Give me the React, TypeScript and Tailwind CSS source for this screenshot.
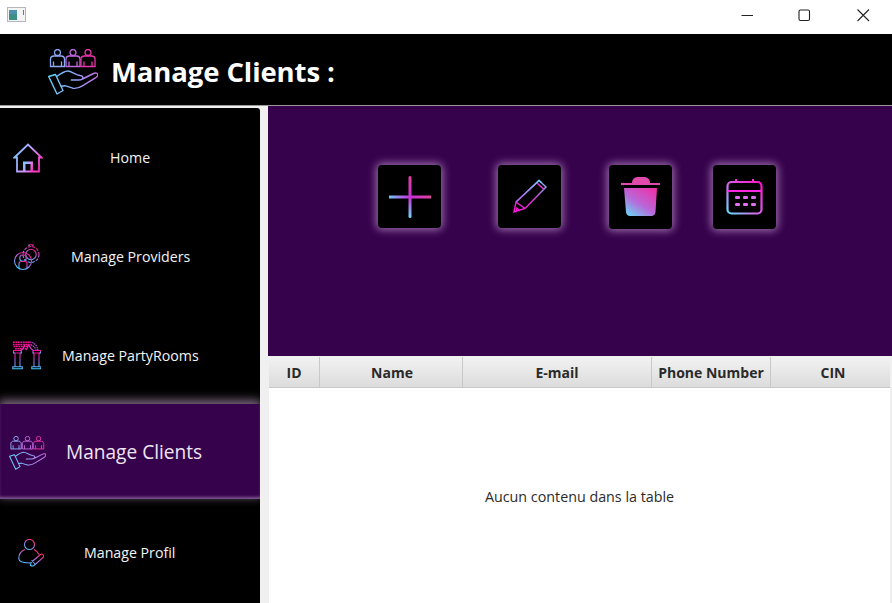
const FONT = "font-['Open_Sans','Noto_Sans',sans-serif]";

function Grad({ id, x1 = 0, y1 = 1, x2 = 1, y2 = 0, from = "#5fd3f8", mid = "#b070e0", to = "#f01fa8" }: { id: string; x1?: number; y1?: number; x2?: number; y2?: number; from?: string; mid?: string; to?: string }) {
  return (
    <defs>
      <linearGradient id={id} x1={x1} y1={y1} x2={x2} y2={y2}>
        <stop offset="0" stopColor={from} />
        <stop offset="0.5" stopColor={mid} />
        <stop offset="1" stopColor={to} />
      </linearGradient>
    </defs>
  );
}

function ClientsIcon({ id, w, h }: { id: string; w: number; h: number }) {
  const person = (x: number, c: string) => (
    <g stroke={c} fill="none" strokeWidth="1.300" key={x}>
      <circle cx={x} cy="3.500" r="3" />
      <path d={`M${x - 7} 17.500v-7c0-2 1.500-3.500 3.500-3.500h7c2 0 3.500 1.500 3.500 3.500v7z`} />
      <path d={`M${x - 4} 17.500v-5M${x + 4} 17.500v-5`} />
    </g>
  );
  return (
    <svg width={w} height={h} viewBox="0 0 50 46">
      <Grad id={id} x1={0} y1={0.5} x2={1} y2={0.5} from="#62d6fb" mid="#90a8f8" to="#c86ce4" />
      {person(9.500, "#8fa8f4")}
      {person(25, "#bd68dc")}
      {person(40, "#e834a8")}
      <path
        d="M.7 27.500l6.800-2 7.500 16-6 3.500z M8 28c4-3 8-6 12-6 3 0 8 4 12 4.500 2 .2 3 1 2.800 2.500-.2 1.500-2 2-4 2h-8 M34.500 30l11-5.500c2-1 4-.5 4.300 1 .3 1.500-1 2.500-2 3.200l-13 8c-4 2.500-7 3-10 2.500l-8-2.500-4.500 .8"
        fill="none"
        stroke={`url(#${id})`}
        strokeWidth="1.400"
        strokeLinejoin="round"
      />
    </svg>
  );
}

function HomeIcon() {
  return (
    <svg width="30" height="30" viewBox="0 0 30 30" fill="none">
      <Grad id="home" x1={0} y1={0.35} x2={1} y2={0.85} from="#78c8ff" mid="#d090fa" to="#ff28b0" />
      <path d="M1.500 14.500L15 1.500l13.500 13H26V28.500H4V14.500z" stroke="url(#home)" strokeWidth="1.800" strokeLinejoin="miter" />
      <path d="M10 18.500h10v10h-2.500v-7.500h-5v7.500H10z" fill="url(#home)" />
    </svg>
  );
}

function ProvidersIcon() {
  return (
    <svg width="28" height="27" viewBox="0 0 28 27" fill="none">
      <Grad id="prov" x1={0.2} y1={1} x2={0.8} y2={0} from="#40ccff" mid="#b070e8" to="#ff1088" />
      <g stroke="url(#prov)" strokeWidth="1.100">
        <circle cx="18" cy="10.500" r="8" strokeDasharray="3 1.300" />
        <circle cx="18" cy="10.500" r="5.200" />
        <path d="M16 2V.8h4V2" />
        <circle cx="10" cy="17" r="8.500" />
        <circle cx="10" cy="14" r="3.200" />
        <path d="M6 24.500V20c0-1.500 1-2.500 2-2.500h4c1 0 2 1 2 2.500v4.500" />
      </g>
    </svg>
  );
}

function RoomIcon() {
  return (
    <svg width="29" height="29" viewBox="0 0 29 29" fill="none">
      <Grad id="room" x1={0.5} y1={1} x2={0.5} y2={0} from="#40ccff" mid="#9a60e0" to="#ff0898" />
      <g stroke="url(#room)" strokeWidth="1.100">
        <path d="M3 26V12h5v14M22 26V12h5v14M.8 27.800h9.500v-2H.8zM19.800 27.800h9v-2h-9z" />
        <path d="M3 12h-1.500v-2.500h8v2.500H8M22 12h-1v-2.500h7.500v2.500H27" />
      </g>
      <path d="M8 10c2-1 4-3 5-7M22 10c-2-1-4-3-5-6M14 9c1-1 2-3 2-5" stroke="#c040c8" strokeWidth="1.100" />
      <path d="M18 1c4 .5 7 3 8 8.500M19 4c2 .5 4 2 5 5" stroke="#b050d0" strokeWidth="1.200" strokeDasharray="1.500 .7" />
      <path d="M1 1.200h18M.8 3.400h19M1.500 5.600h17M3 7.800h12" stroke="#ff0898" strokeWidth="1.500" strokeDasharray="1.800 .7" />
    </svg>
  );
}

function ProfilIcon() {
  return (
    <svg width="26" height="28" viewBox="0 0 26 28" fill="none">
      <Grad id="prof" x1={0.1} y1={1} x2={0.7} y2={0} from="#40ccff" mid="#b070e8" to="#ff3070" />
      <g stroke="url(#prof)" strokeWidth="1.100">
        <circle cx="11.500" cy="5.500" r="5" />
        <path d="M7 10.500C3 12 .8 15.500.8 19.500c0 2.500 3 4.500 12 4.500M16 10.500c2 1 4 3 5 5" />
        <path d="M13 23.500l9.500-8c1-.8 2-.5 2.700.5.600 1 .5 2-.5 2.800l-8.700 7.700c-1 .5-2.500.5-3.500 0z M13.500 21l3.500 4" />
      </g>
    </svg>
  );
}

function NavRow({ icon, label, h, className = "", iconPad, textLeft }: { icon: React.ReactNode; label: string; h: string; className?: string; iconPad: string; textLeft: string }) {
  return (
    <div className={`flex items-center ${h} ${className}`}>
      <div className={`w-[60px] ${iconPad} shrink-0 flex`}>{icon}</div>
      <span className={`${textLeft} text-[14.200px] text-center text-[#f4f4f4] whitespace-nowrap`}>{label}</span>
    </div>
  );
}

function ActionButton({ children, className }: { children: React.ReactNode; className: string }) {
  return (
    <div className={`w-[63px] bg-black rounded-[4px] flex items-center justify-center shadow-[0_0_9px_2px_rgba(225,180,235,0.6)] ${className}`}>
      {children}
    </div>
  );
}

export default function App() {
  return (
    <div className={`w-[892px] h-[603px] overflow-hidden flex flex-col bg-[#f0f0f0] ${FONT}`}>
      {/* window title bar */}
      <div className="h-[34px] shrink-0 bg-white flex items-center">
        <svg className="ml-[7px] mb-[4px]" width="20" height="16" viewBox="0 0 20 16">
          <rect x=".5" y=".5" width="18" height="14" fill="#f4f4f4" stroke="#b5b5bd" />
          <rect x="2" y="3" width="8" height="10" fill="#3f8f86" />
          <rect x="2" y="3" width="8" height="4" fill="#4f8fb0" />
          <rect x="16" y="3" width="1" height="5" fill="#3c8aa0" />
        </svg>
        <div className="ml-auto flex items-center">
          <svg width="14" height="14" viewBox="0 0 14 14" className="mr-[43px] mb-[5px]"><path d="M1.500 7.500h11.500" stroke="#222" strokeWidth="1" /></svg>
          <svg width="14" height="14" viewBox="0 0 14 14" className="mr-[45px] mb-[5px]"><rect x="2" y="2" width="10.500" height="10.500" rx="1.500" fill="none" stroke="#222" strokeWidth="1.100" /></svg>
          <svg width="14" height="14" viewBox="0 0 14 14" className="mr-[22px] mb-[5px]"><path d="M1.500 1.500l11.500 11.500M13 1.500L1.500 13" stroke="#222" strokeWidth="1.100" /></svg>
        </div>
      </div>

      {/* header */}
      <div className="h-[71px] shrink-0 bg-black flex items-center border-b border-[#9a9a9a] box-content">
        <div className="ml-[48px] mt-[5px] flex"><ClientsIcon id="hdr" w={50} h={46} /></div>
        <span className="ml-[13px] mt-[5px] text-[27.500px] font-bold text-white leading-none tracking-[-0.1px]">Manage Clients :</span>
      </div>

      <div className="flex-1 flex min-h-0">
        {/* sidebar */}
        <div className="w-[260px] shrink-0 mt-[2px] bg-black rounded-tr-[3px] flex flex-col overflow-hidden">
          <NavRow h="h-[100px]" iconPad="pl-[13px]" textLeft="ml-[50px]" icon={<HomeIcon />} label="Home" />
          <NavRow h="h-[98px]" iconPad="pl-[13px]" textLeft="ml-[11px]" icon={<ProvidersIcon />} label="Manage Providers" />
          <NavRow h="h-[98px]" iconPad="pl-[12px]" textLeft="ml-[2px]" className="pt-[1px]" icon={<RoomIcon />} label="Manage PartyRooms" />
          <div className="h-[95px] shrink-0 bg-[#35024b] flex items-center pt-[2px] shadow-[0_-3px_9px_1px_rgba(225,190,235,0.55),inset_0_-3px_3px_-1px_rgba(225,190,235,0.45)] relative">
            <div className="pl-[9px] flex w-[60px]"><ClientsIcon id="nav" w={37} h={34} /></div>
            <span className="ml-[6px] text-[19.100px] text-[#efe6f2] whitespace-nowrap">Manage Clients</span>
          </div>
          <NavRow h="flex-1" iconPad="pl-[18px]" textLeft="ml-[24px]" className="pt-[4px]" icon={<ProfilIcon />} label="Manage Profil" />
        </div>

        {/* right */}
        <div className="flex-1 ml-[8px] flex flex-col min-w-0">
          <div className="h-[250px] shrink-0 bg-[#35024b] relative flex items-start pt-[59px] pl-[110px]">
            <ActionButton className="h-[63px]">
              <svg width="44" height="44" viewBox="0 0 44 44" fill="none">
                <defs>
                  <linearGradient id="pv" x1="0" y1="0" x2="0" y2="1"><stop offset="0" stopColor="#e0409a" /><stop offset=".5" stopColor="#c830d8" /><stop offset="1" stopColor="#70d8f8" /></linearGradient>
                  <linearGradient id="ph" x1="0" y1="0" x2="1" y2="0"><stop offset="0" stopColor="#70c8f8" /><stop offset=".5" stopColor="#c830d8" /><stop offset="1" stopColor="#e0409a" /></linearGradient>
                </defs>
                <rect x="20.500" y="1" width="3" height="42" rx="1.500" fill="url(#pv)" />
                <rect x="1" y="20.500" width="42" height="3" fill="url(#ph)" />
              </svg>
            </ActionButton>
            <ActionButton className="ml-[57px] h-[63px]">
              <svg width="36" height="36" viewBox="0 0 36 36" fill="none">
                <defs>
                  <linearGradient id="pen" x1="0" y1="1" x2="1" y2="0"><stop offset="0" stopColor="#ff18d8" /><stop offset=".5" stopColor="#f030e0" /><stop offset="1" stopColor="#70c8f0" /></linearGradient>
                  <linearGradient id="pen2" x1="0" y1="0.5" x2="1" y2="0"><stop offset="0" stopColor="#a070f0" /><stop offset="1" stopColor="#70d0f8" /></linearGradient>
                </defs>
                <path d="M2 33l2-10L27 1.500l7 6.500-21 21.500z M4 23l9 6.500M4 33l1-4 3 3" stroke="url(#pen)" strokeWidth="1.400" />
                <path d="M4 23L27 1.500l2.500 2.300" stroke="url(#pen2)" strokeWidth="1.500" />
                <path d="M25 4l7 6.500" stroke="url(#pen)" strokeWidth="1.400" />
              </svg>
            </ActionButton>
            <ActionButton className="ml-[48px] h-[64px]">
              <svg width="40" height="42" viewBox="0 0 40 42" fill="none">
                <defs>
                  <linearGradient id="trash" x1=".1" y1="1" x2=".9" y2="0"><stop offset="0" stopColor="#68d8f8" /><stop offset=".45" stopColor="#b868d8" /><stop offset="1" stopColor="#f030a8" /></linearGradient>
                </defs>
                <path d="M11 7c0-4 3-6 6-6h6c3 0 6 2 6 6z" fill="#e04aaa" />
                <rect y="7" width="39" height="2" fill="#e04ab0" />
                <path d="M3 12h33l-1.500 24c-.2 2.500-2 4-4 4H9c-2 0-3.800-1.500-4-4z" fill="url(#trash)" />
              </svg>
            </ActionButton>
            <ActionButton className="ml-[41px] h-[64px]">
              <svg width="38" height="38" viewBox="0 0 38 38" fill="none">
                <defs>
                  <linearGradient id="cal" x1="0" y1="1" x2="1" y2="0"><stop offset="0" stopColor="#60e0ff" /><stop offset=".4" stopColor="#d070f0" /><stop offset="1" stopColor="#ff10c8" /></linearGradient>
                </defs>
                <path d="M10 1v4M27 1v4" stroke="#f030d8" strokeWidth="2" />
                <rect x="1.500" y="4" width="34" height="31.500" rx="4" stroke="url(#cal)" strokeWidth="2.200" />
                <path d="M1.500 13h34" stroke="#f828e0" strokeWidth="2.200" />
                <g fill="#e070f0">
                  <rect x="9" y="18" width="5" height="3" rx="1.200" /><rect x="17" y="18" width="5" height="3" rx="1.200" /><rect x="25" y="18" width="5" height="3" rx="1.200" />
                  <rect x="9" y="25" width="5" height="3" rx="1.200" /><rect x="17" y="25" width="5" height="3" rx="1.200" /><rect x="25" y="25" width="5" height="3" rx="1.200" />
                </g>
              </svg>
            </ActionButton>
          </div>

          {/* table */}
          <div className="flex-1 mt-[1px] ml-[1px] mr-[2px] bg-white flex flex-col min-h-0">
            <div className="h-[30px] shrink-0 flex text-[14px] font-bold text-[#2a2a2a] bg-gradient-to-b from-[#f2f2f2] to-[#dcdcdc] border-b border-[#c8c8c8] box-content">
              <div className="w-[51px] flex items-center justify-center border-r border-[#c8c8c8]">ID</div>
              <div className="w-[143px] flex items-center justify-center border-r border-[#c8c8c8] pl-[2px]">Name</div>
              <div className="w-[189px] flex items-center justify-center border-r border-[#c8c8c8]">E-mail</div>
              <div className="w-[119px] flex items-center justify-center border-r border-[#c8c8c8] whitespace-nowrap">Phone Number</div>
              <div className="flex-1 flex items-center justify-center pl-[5px]">CIN</div>
            </div>
            <div className="flex-1 flex justify-center pt-[98px] text-[14.300px] text-[#2b2b2b]">Aucun contenu dans la table</div>
          </div>
        </div>
      </div>
    </div>
  );
}
